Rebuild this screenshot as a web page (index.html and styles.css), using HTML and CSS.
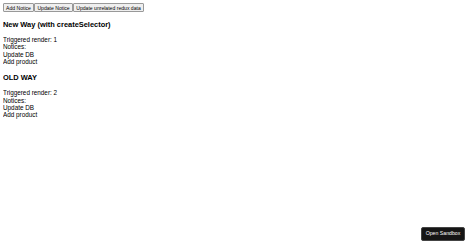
FILE: index.html
```html
<!DOCTYPE html>
<html>
<head>
<meta charset="utf-8">
<link rel="stylesheet" href="styles.css">
</head>
<body>
<div class="toolbar">
  <button class="btn">Add Notice</button><button class="btn">Update Notice</button><button class="btn">Update unrelated redux data</button>
</div>
<h3 class="title">New Way (with createSelector)</h3>
<div class="block">
  <div>Triggered render: 1</div>
  <div>Notices:</div>
  <div>Update DB</div>
  <div>Add product</div>
</div>
<h3 class="title">OLD WAY</h3>
<div class="block">
  <div>Triggered render: 2</div>
  <div>Notices:</div>
  <div>Update DB</div>
  <div>Add product</div>
</div>
<a class="sandbox">Open Sandbox</a>
</body>
</html>
```
FILE: styles.css
```css
html, body {
  background: #fff;
}
body {
  margin: 3px;
  font-family: "Liberation Sans", Arial, sans-serif;
  font-size: 6.35px;
  line-height: 7.35px;
  color: #000;
}
.toolbar {
  display: flex;
  gap: 0.5px;
}
.btn {
  font-family: "Liberation Sans", Arial, sans-serif;
  font-size: 5.1px;
  line-height: 6px;
  height: 9px;
  padding: 0 2px;
  margin: 0;
  background: #efefef;
  border: 1px solid #999;
  border-radius: 1px;
  color: #000;
}
.title {
  font-size: 7.45px;
  line-height: 9px;
  font-weight: bold;
  margin: 7.5px 0 7.5px;
}
.sandbox {
  position: fixed;
  right: 9px;
  bottom: 7px;
  width: 44px;
  height: 14px;
  box-sizing: border-box;
  display: flex;
  align-items: center;
  justify-content: center;
  background: #151515;
  color: #fff;
  font-size: 5.2px;
  border-radius: 2px;
  border: 1px solid #444;
}
```
